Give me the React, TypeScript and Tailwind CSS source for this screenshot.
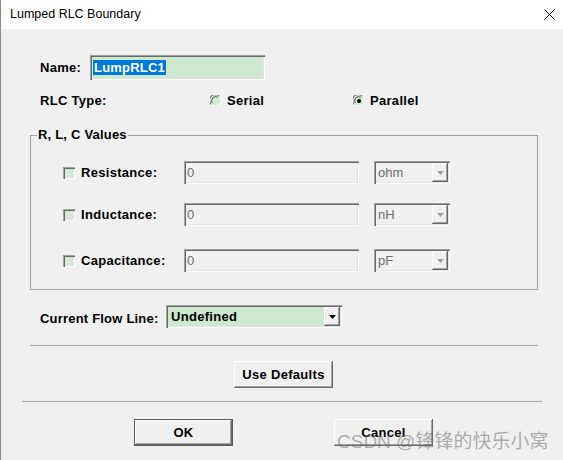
import type { ReactNode } from 'react'

const raised = 'shadow-[inset_-1px_-1px_0_#696969,inset_1px_1px_0_#ffffff,inset_-2px_-2px_0_#a0a0a0]'
const sunken = 'shadow-[inset_1px_1px_0_#a0a0a0,inset_2px_2px_0_#696969,inset_-1px_-1px_0_#ffffff,inset_-2px_-2px_0_#e3e3e3]'

const Radio = ({ checked }: { checked?: boolean }) => (
  <svg width="12" height="12" viewBox="0 0 12 12">
    <circle cx="6" cy="6" r="5.5" fill="#d3e9d3" />
    <path d="M1.2 9.2 A5 5 0 0 1 9.2 1.2" fill="none" stroke="#808080" strokeWidth="1.3" />
    <path d="M9.6 1.8 A5 5 0 0 1 1.8 9.6" fill="none" stroke="#ffffff" strokeWidth="1.2" />
    <path d="M2.3 7.8 A4 4 0 0 1 7.8 2.3" fill="none" stroke="#404040" strokeWidth="0.9" />
    {checked && <circle cx="6" cy="6" r="2" fill="#000" />}
  </svg>
)

const Arrow = ({ dark }: { dark?: boolean }) => (
  <div className={`flex h-full w-[16px] items-center justify-center bg-[#f0f0f0] ${raised}`}>
    <svg width="7" height="4" viewBox="0 0 7 4">
      <path d="M0 0 H7 L3.5 4 Z" fill={dark ? '#000' : '#a0a0a0'} />
    </svg>
  </div>
)

const Button = ({ children, primary }: { children: ReactNode; primary?: boolean }) => (
  <div
    className={`flex h-[27px] w-[99px] items-center justify-center bg-[#f0f0f0] text-[13px] font-bold tracking-[0.3px] text-black ${primary ? 'border border-[#5a5a5a]' : ''} ${raised}`}
  >
    {children}
  </div>
)

const ValueRow = ({ label, unit, className }: { label: string; unit: string; className?: string }) => (
  <div className={`flex h-[23px] items-center pl-[32px] ${className ?? ''}`}>
    <div className={`mr-[6px] h-[12px] w-[12px] bg-[#d3e9d3] ${sunken}`} />
    <span className="w-[103px] text-[13px] font-bold tracking-[0.3px] text-black">{label}</span>
    <div className={`mr-[15px] flex h-full w-[175px] items-center pl-[3px] text-[13px] text-[#6d6d6d] ${sunken}`}>0</div>
    <div className={`flex h-full w-[76px] items-center justify-between p-[2px] pl-[4px] text-[13px] text-[#6d6d6d] ${sunken}`}>
      <span>{unit}</span>
      <Arrow />
    </div>
  </div>
)

export default function App() {
  return (
    <div className="relative h-[460px] w-[563px] overflow-hidden border-l border-[#8a8a8a] bg-[#f0f0f0] font-['Liberation_Sans',Arial,sans-serif]">
      <div className="flex h-[29px] items-center justify-between bg-white pl-[9px] pr-[8px]">
        <span className="text-[12.5px] text-black">Lumped RLC Boundary</span>
        <svg width="11" height="11" viewBox="0 0 11 11">
          <path d="M0.5 0.5 L10.5 10.5 M10.5 0.5 L0.5 10.5" stroke="#000" strokeWidth="1" />
        </svg>
      </div>

      <div className="mt-[26px] flex h-[25px] items-center pl-[39px]">
        <span className="w-[50px] text-[13px] font-bold tracking-[0.3px] text-black">Name:</span>
        <div className={`flex h-full w-[175px] items-center bg-[#cce8cf] pl-[3px] ${sunken}`}>
          <span className="bg-[#0078d7] px-[1px] text-[13px] font-bold leading-[15px] tracking-[0.2px] text-white">LumpRLC1</span>
        </div>
      </div>

      <div className="mt-[11px] flex h-[20px] items-center pl-[39px] text-[13px] font-bold tracking-[0.3px] text-black">
        <span className="w-[170px]">RLC Type:</span>
        <div className="flex w-[143px] items-center gap-[5px]">
          <Radio />
          <span>Serial</span>
        </div>
        <div className="flex items-center gap-[5px]">
          <Radio checked />
          <span>Parallel</span>
        </div>
      </div>

      <div className="relative ml-[29px] mt-[24px] h-[155px] w-[508px] border border-[#a0a0a0] pt-[25px]">
        <span className="absolute -top-[9px] left-[6px] bg-[#f0f0f0] px-[1px] text-[13px] font-bold leading-[16px] tracking-[0.2px] text-black">
          R, L, C Values
        </span>
        <ValueRow label="Resistance:" unit="ohm" />
        <ValueRow label="Inductance:" unit="nH" className="mt-[19px]" />
        <ValueRow label="Capacitance:" unit="pF" className="mt-[23px]" />
      </div>

      <div className="mt-[15px] flex h-[23px] items-center pl-[39px]">
        <span className="w-[126px] pt-[4px] text-[13px] font-bold tracking-[0.2px] text-black">Current Flow Line:</span>
        <div className={`flex h-full w-[176px] items-center justify-between bg-[#cce8cf] p-[2px] pl-[5px] text-[13px] font-bold tracking-[0.3px] text-black ${sunken}`}>
          <span>Undefined</span>
          <Arrow dark />
        </div>
      </div>

      <div className="ml-[29px] mt-[17px] h-px w-[508px] bg-[#a0a0a0]" />

      <div className="ml-[233px] mt-[15px]">
        <Button>Use Defaults</Button>
      </div>

      <div className="ml-[21px] mt-[13px] h-px w-[520px] bg-[#a0a0a0]" />

      <div className="ml-[133px] mt-[17px] flex gap-[101px]">
        <Button primary>OK</Button>
        <Button>Cancel</Button>
      </div>

      <span className="absolute left-[336px] top-[429px] font-['Liberation_Sans','Noto_Sans_CJK_SC',sans-serif] text-[19px] leading-[26px] text-[rgba(110,110,110,0.55)]">
        CSDN @锋锋的快乐小窝
      </span>
    </div>
  )
}
